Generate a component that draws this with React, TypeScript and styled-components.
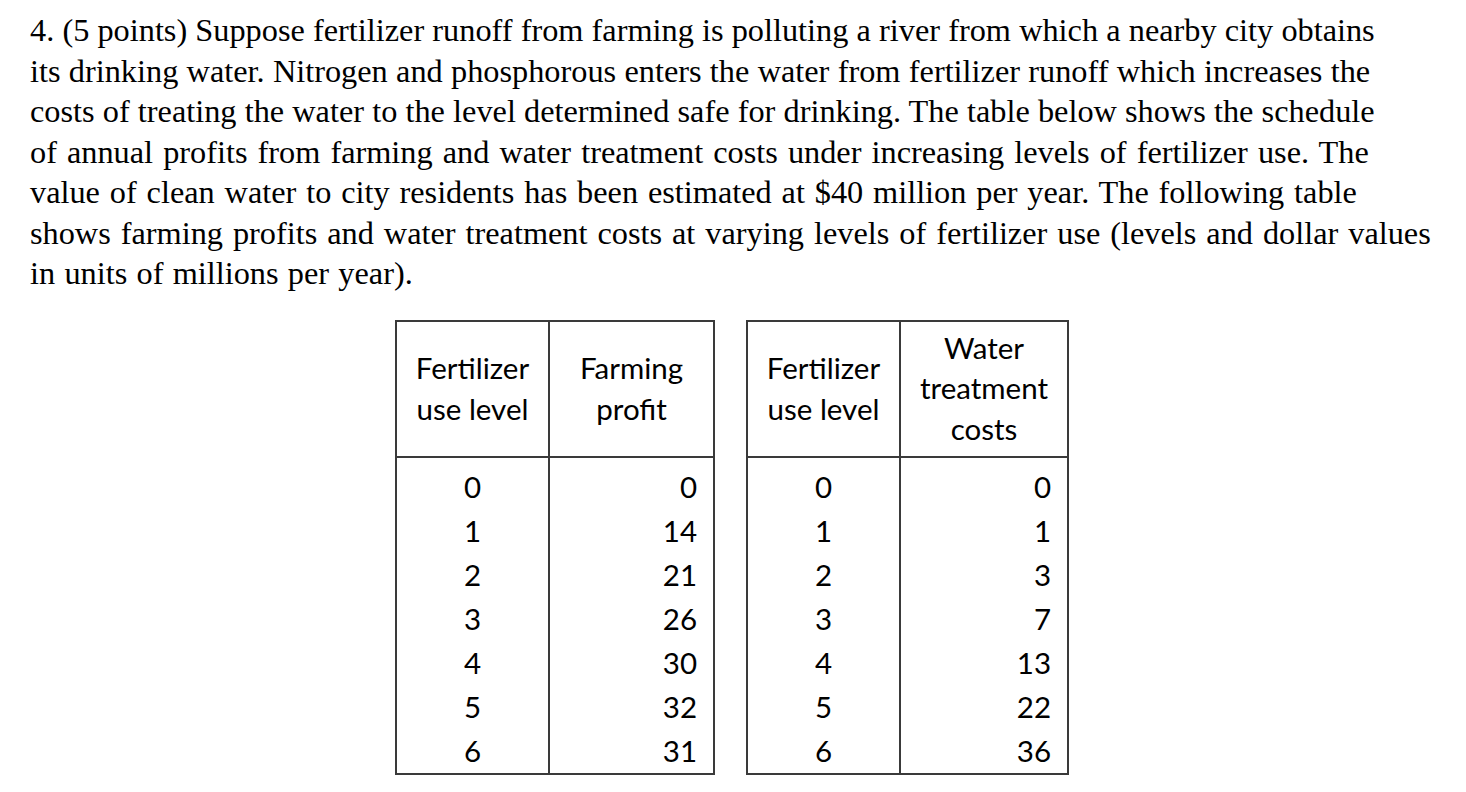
import React from "react"
import styled, { createGlobalStyle } from "styled-components"

const GlobalStyle = createGlobalStyle`
  html, body {
    margin: 0;
    padding: 0;
    background: #fff;
  }
`

// word-spacing per line so the wraps end where the scanned page ends them
const lines: { text: string; spacing: number }[] = [
  { text: "4. (5 points) Suppose fertilizer runoff from farming is polluting a river from which a nearby city obtains", spacing: 0.1 },
  { text: "its drinking water. Nitrogen and phosphorous enters the water from fertilizer runoff which increases the", spacing: 0.25 },
  { text: "costs of treating the water to the level determined safe for drinking. The table below shows the schedule", spacing: 0.1 },
  { text: "of annual profits from farming and water treatment costs under increasing levels of fertilizer use. The", spacing: 2 },
  { text: "value of clean water to city residents has been estimated at $40 million per year. The following table", spacing: 1.8 },
  { text: "shows farming profits and water treatment costs at varying levels of fertilizer use (levels and dollar values", spacing: 1.9 },
  { text: "in units of millions per year).", spacing: 1.2 },
]

const profits = [0, 14, 21, 26, 30, 32, 31]
const costs = [0, 1, 3, 7, 13, 22, 36]

const Page = styled.div`
  padding: 10px 0 0 30px;
  color: #000;
`

const Question = styled.div`
  font-family: "Liberation Serif", "Times New Roman", serif;
  font-size: 32.3px;
  line-height: 40.5px;
`

const Line = styled.div<{ $spacing: number }>`
  white-space: nowrap;
  word-spacing: ${(p) => p.$spacing}px;
`

const Tables = styled.div`
  display: flex;
  gap: 31px;
  margin: 26px 0 0 365px;
`

const Table = styled.table`
  border-collapse: collapse;
  border: 2px solid #3a3a3a;
  font-family: Lato, "Carlito", "Liberation Sans", sans-serif;
  font-size: 29.5px;
  color: #000;
`

const HeadCell = styled.th<{ $w: number }>`
  width: ${(p) => p.$w}px;
  height: 134px;
  padding: 0;
  border: 2px solid #3a3a3a;
  font-weight: 400;
  line-height: 40.5px;
  text-align: center;
  vertical-align: middle;
`

const Cell = styled.td<{ $align: "center" | "right"; $first?: boolean }>`
  padding: ${(p) => (p.$first ? "7px" : "0")} ${(p) => (p.$align === "right" ? "16px" : "0")} 0 0;
  height: 44.1px;
  line-height: 44.1px;
  text-align: ${(p) => p.$align};
  border-left: 2px solid #3a3a3a;
  border-right: 2px solid #3a3a3a;
`

const DataTable: React.FC<{
  props: {
    heads: [React.ReactNode, React.ReactNode]
    values: number[]
    widths: [number, number]
  }
}> = ({ props }) => {
  return (
    <Table>
      <thead>
        <tr>
          <HeadCell $w={props.widths[0]}>{props.heads[0]}</HeadCell>
          <HeadCell $w={props.widths[1]}>{props.heads[1]}</HeadCell>
        </tr>
      </thead>
      <tbody>
        {props.values.map((v, i) => (
          <tr key={i}>
            <Cell $align="center" $first={i === 0}>
              {i}
            </Cell>
            <Cell $align="right" $first={i === 0}>
              {v}
            </Cell>
          </tr>
        ))}
      </tbody>
    </Table>
  )
}

const App: React.FC = () => {
  return (
    <Page>
      <GlobalStyle />
      <Question>
        {lines.map((l, i) => (
          <Line key={i} $spacing={l.spacing}>
            {l.text}
          </Line>
        ))}
      </Question>
      <Tables>
        <DataTable
          props={{
            heads: [
              <>
                Fertilizer
                <br />
                use level
              </>,
              <>
                Farming
                <br />
                profit
              </>,
            ],
            values: profits,
            widths: [151, 163],
          }}
        />
        <DataTable
          props={{
            heads: [
              <>
                Fertilizer
                <br />
                use level
              </>,
              <>
                Water
                <br />
                treatment
                <br />
                costs
              </>,
            ],
            values: costs,
            widths: [151, 166],
          }}
        />
      </Tables>
    </Page>
  )
}

export default App
